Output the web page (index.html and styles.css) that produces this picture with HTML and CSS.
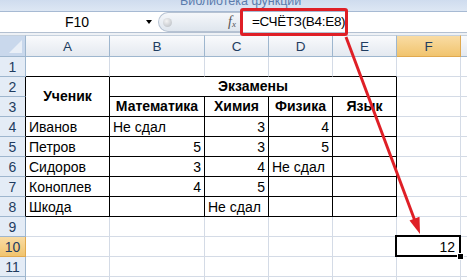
FILE: index.html
```html
<!DOCTYPE html>
<html lang="ru">
<head>
    <meta charset="UTF-8">
    <title>СЧЁТЗ</title>
    <link rel="stylesheet" href="styles.css">
</head>
<body>

<div class="ribbon">
    <span class="group-label">Библиотека функций</span>
</div>

<div class="formula-bar">
    <div class="name-box">
        <span class="cell-ref">F10</span>
        <span class="drop"></span>
    </div>
    <div class="fx-area">
        <span class="knob"></span>
        <span class="fx">f<sub>x</sub></span>
    </div>
    <div class="formula">=СЧЁТЗ(B4:E8)</div>
</div>

<div class="spacer"></div>

<table class="sheet">
    <colgroup>
        <col class="c-rh">
        <col class="c-a">
        <col class="c-b">
        <col class="c-std">
        <col class="c-std">
        <col class="c-std">
        <col class="c-std">
        <col class="c-std">
    </colgroup>
    <tr class="head">
        <th class="corner"></th>
        <th class="ch">A</th>
        <th class="ch">B</th>
        <th class="ch">C</th>
        <th class="ch">D</th>
        <th class="ch">E</th>
        <th class="ch active">F</th>
        <th class="ch">G</th>
    </tr>
    <tr>
        <th class="rh">1</th>
        <td class="above"></td><td class="above"></td><td class="above"></td><td class="above"></td><td class="above"></td><td></td><td></td>
    </tr>
    <tr>
        <th class="rh edge">2</th>
        <td class="t bold center" rowspan="2">Ученик</td>
        <td class="t bold center" colspan="4">Экзамены</td>
        <td></td><td></td>
    </tr>
    <tr>
        <th class="rh edge">3</th>
        <td class="t bold center">Математика</td>
        <td class="t bold center">Химия</td>
        <td class="t bold center">Физика</td>
        <td class="t bold center">Язык</td>
        <td></td><td></td>
    </tr>
    <tr>
        <th class="rh edge">4</th>
        <td class="t">Иванов</td><td class="t">Не сдал</td><td class="t num">3</td><td class="t num">4</td><td class="t"></td><td></td><td></td>
    </tr>
    <tr>
        <th class="rh edge">5</th>
        <td class="t">Петров</td><td class="t num">5</td><td class="t num">3</td><td class="t num">5</td><td class="t"></td><td></td><td></td>
    </tr>
    <tr>
        <th class="rh edge">6</th>
        <td class="t">Сидоров</td><td class="t num">3</td><td class="t num">4</td><td class="t">Не сдал</td><td class="t"></td><td></td><td></td>
    </tr>
    <tr>
        <th class="rh edge">7</th>
        <td class="t">Коноплев</td><td class="t num">4</td><td class="t num">5</td><td class="t"></td><td class="t"></td><td></td><td></td>
    </tr>
    <tr>
        <th class="rh edge">8</th>
        <td class="t">Шкода</td><td class="t"></td><td class="t">Не сдал</td><td class="t"></td><td class="t"></td><td></td><td></td>
    </tr>
    <tr>
        <th class="rh">9</th>
        <td></td><td></td><td></td><td></td><td></td><td></td><td></td>
    </tr>
    <tr>
        <th class="rh active">10</th>
        <td></td><td></td><td></td><td></td><td></td><td class="num selected">12</td><td></td>
    </tr>
    <tr>
        <th class="rh">11</th>
        <td></td><td></td><td></td><td></td><td></td><td></td><td></td>
    </tr>
    <tr>
        <th class="rh">12</th>
        <td></td><td></td><td></td><td></td><td></td><td></td><td></td>
    </tr>
</table>

<!-- callout: frame round the formula and arrow to the result -->
<svg class="callout" width="467" height="280" viewBox="0 0 467 280">
    <rect x="241.5" y="9.5" width="105" height="25" rx="1.5" fill="none" stroke="#df1f26" stroke-width="3"/>
    <line x1="346" y1="37" x2="415" y2="221" stroke="#df1f26" stroke-width="3"/>
    <polygon points="420,234 409.5,220.5 419.5,216.8" fill="#df1f26"/>
</svg>

</body>
</html>
```

FILE: styles.css
```css
html, body {
    margin: 0;
    padding: 0;
    overflow: hidden;
}

body {
    width: 467px;
    height: 280px;
    position: relative;
    background: #fff;
    font-family: 'Liberation Sans', Arial, sans-serif;
    font-size: 13px;
    color: #000;
}

.ribbon {
    height: 11px;
    border-bottom: 1px solid #a7bad3;
    background: linear-gradient(#cfdcee, #dde7f4);
    overflow: hidden;
}

.group-label {
    display: block;
    margin: -6px 0 0 180px;
    font-size: 12.5px;
    line-height: 15px;
    color: #5b7cad;
}

.formula-bar {
    display: flex;
    height: 20px;
    border-bottom: 1px solid #b3c0d1;
}

.name-box {
    width: 158px;
    display: flex;
    align-items: center;
    background: #fff;
}

.cell-ref {
    flex: 1;
    text-align: center;
    font-size: 14px;
    padding-left: 8px;
}

.drop {
    width: 0;
    height: 0;
    margin-right: 6px;
    border-left: 3.5px solid transparent;
    border-right: 3.5px solid transparent;
    border-top: 4px solid #000;
}

.fx-area {
    width: 82px;
    display: flex;
    align-items: center;
    justify-content: space-between;
    box-sizing: border-box;
    border: 1px solid #b6c2d2;
    border-right: none;
    border-radius: 10px 0 0 10px;
    background: linear-gradient(#f5f7fa, #dfe6ee);
}

.knob {
    width: 9px;
    height: 9px;
    margin-left: 4px;
    border-radius: 50%;
    background: radial-gradient(circle at 40% 35%, #f4f4f4, #b3b8bf);
}

.fx {
    margin-right: 4px;
    font-family: 'Liberation Serif', 'Times New Roman', serif;
    font-style: italic;
    font-size: 14px;
    color: #555;
}

.fx sub {
    font-size: 9px;
    vertical-align: -1px;
}

.formula {
    flex: 1;
    background: #fff;
    padding-left: 12px;
    font-size: 13.5px;
    line-height: 20px;
    letter-spacing: -0.3px;
}

.spacer {
    height: 2px;
    background: #eef1f5;
}

.sheet {
    border-collapse: separate;
    border-spacing: 0;
    table-layout: fixed;
    width: 525px;
}

.c-rh { width: 26px; }
.c-a { width: 84px; }
.c-b { width: 95px; }
.c-std { width: 64px; }

.sheet tr {
    height: 20px;
}

.sheet tr.head {
    height: 22px;
}

.sheet th, .sheet td {
    padding: 0 3px;
    border-right: 1px solid #d4dbe6;
    border-bottom: 1px solid #d4dbe6;
    white-space: nowrap;
    overflow: visible;
    font-weight: normal;
    font-size: 14px;
    line-height: 17px;
    vertical-align: bottom;
}

.sheet th {
    text-align: center;
    color: #1f3c60;
    padding: 0;
}

.sheet .ch {
    background: linear-gradient(#f9fafc, #e4e9f0);
    border-top: 1px solid #c5d1de;
    border-right-color: #9eb6ce;
    border-bottom-color: #9eb6ce;
    vertical-align: middle;
    font-size: 13.5px;
}

.sheet .corner {
    position: relative;
    background: #c9d8ec;
    border-top: 1px solid #c5d1de;
    border-right-color: #9eb6ce;
    border-bottom-color: #9eb6ce;
}

.corner::after {
    content: "";
    position: absolute;
    right: 3px;
    bottom: 3px;
    width: 13px;
    height: 13px;
    background: #e9eff7;
    clip-path: polygon(100% 0, 100% 100%, 0 100%);
}

.sheet .rh {
    background: #e4ecf6;
    border-right-color: #9eb6ce;
    border-bottom-color: #9eb6ce;
    font-size: 14px;
}

.sheet .rh.edge {
    border-right-color: #000;
}

.sheet .ch.active, .sheet .rh.active {
    background: linear-gradient(#f9dca4, #f1c46e);
    border-right-color: #e0a94f;
    border-bottom-color: #e0a94f;
}

.sheet .above {
    border-bottom-color: #000;
}

.sheet .t {
    border-right-color: #000;
    border-bottom-color: #000;
}

.sheet .bold {
    font-weight: bold;
}

.sheet .center {
    text-align: center;
    vertical-align: middle;
}

.sheet .num {
    text-align: right;
}

.sheet .selected {
    position: relative;
    padding-right: 5px;
}

.selected::before {
    content: "";
    position: absolute;
    left: -2px;
    top: -2px;
    right: -1px;
    bottom: -1px;
    border: 2px solid #000;
}

.selected::after {
    content: "";
    position: absolute;
    right: -4px;
    bottom: -4px;
    width: 5px;
    height: 5px;
    background: #000;
    border: 1px solid #fff;
}

.callout {
    position: absolute;
    left: 0;
    top: 0;
    pointer-events: none;
}
```
